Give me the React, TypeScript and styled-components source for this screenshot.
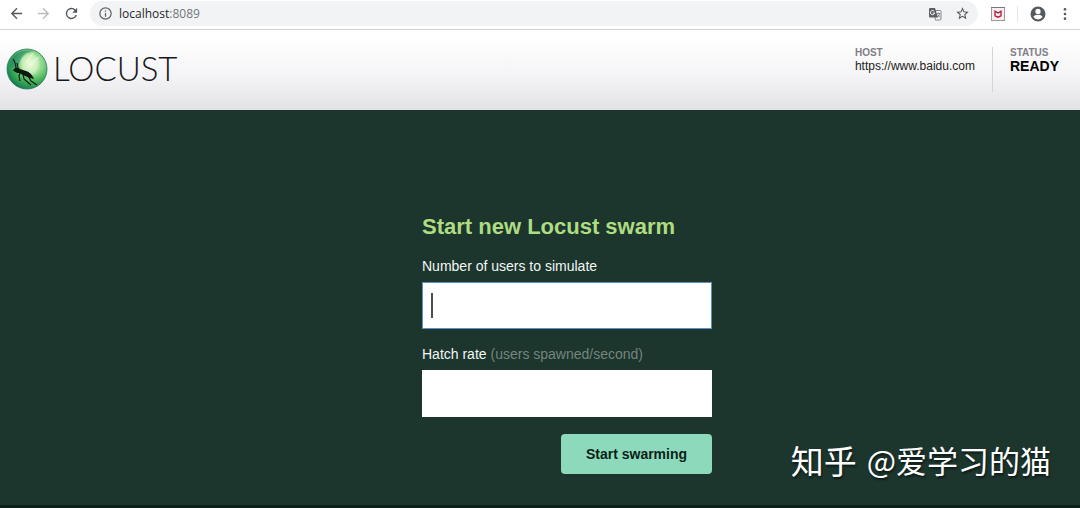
import React from "react";
import styled, { createGlobalStyle } from "styled-components";

const Global = createGlobalStyle`
  * { box-sizing: border-box; }
  html, body, #root { height: 100%; }
  body {
    margin: 0;
    background: #1c352d;
    font-family: "Liberation Sans", Arial, sans-serif;
  }
`;

const Page = styled.div`
  position: relative;
  display: flex;
  flex-direction: column;
  min-height: 100%;
`;

const Toolbar = styled.div`
  display: flex;
  align-items: center;
  height: 30px;
  padding: 0 7px 2px 8px;
  background: #fff;
  border-bottom: 1px solid #d2d3d5;
`;

const IconButton = styled.button<{ $gap?: number }>`
  display: flex;
  flex: none;
  padding: 0;
  margin-right: ${(p) => p.$gap ?? 0}px;
  border: 0;
  background: none;
`;

const AddressBar = styled.div`
  display: flex;
  flex: 1;
  align-items: center;
  height: 25px;
  margin-right: 13px;
  padding: 0 8px;
  border-radius: 13px;
  background: #f1f3f4;
`;

const Address = styled.div`
  flex: 1;
  margin-left: 6px;
  color: #74777b;
  font: 12px/16px "Open Sans", "Noto Sans", sans-serif;
`;

const AddressHost = styled.span`
  color: #26282b;
`;

const Separator = styled.div`
  width: 1px;
  height: 16px;
  margin-right: 11px;
  background: #e6e7e9;
`;

const Header = styled.header`
  display: flex;
  justify-content: space-between;
  height: 80px;
  padding: 17px 21px 0 6px;
  background: linear-gradient(#fff 10%, #f5f4f6 55%, #e3e2e5);
`;

const Brand = styled.a`
  display: flex;
  align-items: center;
  gap: 5px;
  height: 44px;
  color: #17181a;
  text-decoration: none;
`;

const BrandName = styled.span`
  padding-bottom: 2px;
  font: 300 33px/42px Lato, sans-serif;
`;

const Stats = styled.div`
  display: flex;
`;

const Stat = styled.div`
  height: 45px;
  & + & {
    margin-left: 17px;
    padding-left: 17px;
    border-left: 1px solid #d4d3d6;
  }
`;

const StatLabel = styled.div`
  color: #808084;
  font-size: 10px;
  font-weight: bold;
  line-height: 12px;
`;

const StatValue = styled.div<{ $strong?: boolean }>`
  color: ${(p) => (p.$strong ? "#000" : "#222")};
  font-size: ${(p) => (p.$strong ? 14 : 12)}px;
  font-weight: ${(p) => (p.$strong ? "bold" : "normal")};
  line-height: 14px;
`;

const Main = styled.main`
  display: flex;
  flex: 1;
  justify-content: center;
  padding: 102px 0 30px 54px;
  border-bottom: 3px solid #10201b;
  background: #1c352d;
`;

const Form = styled.form`
  display: flex;
  flex-direction: column;
  width: 290px;
`;

const Title = styled.h2`
  margin: 0 0 16px;
  color: #addc81;
  font-size: 22px;
  line-height: 30px;
  white-space: nowrap;
`;

const Label = styled.label`
  margin-bottom: 8px;
  color: #f2f7f4;
  font-size: 14px;
  line-height: 16px;
`;

const Hint = styled.span`
  color: #75857d;
`;

const Field = styled.input<{ $current?: boolean }>`
  height: 47px;
  margin-bottom: 17px;
  padding: 0 9px;
  border: 1px solid ${(p) => (p.$current ? "#5b91c4" : "#fff")};
  border-radius: 0;
  outline: 0;
  background: ${(p) =>
    p.$current
      ? "linear-gradient(#4c4f58, #4c4f58) 8px center / 2px 25px no-repeat #fff"
      : "#fff"};
  font: 22px/26px "Liberation Sans", Arial, sans-serif;
`;

const Submit = styled.button`
  align-self: flex-end;
  width: 151px;
  height: 40px;
  padding: 0;
  border: 0;
  border-radius: 4px;
  background: #8cdabb;
  color: #0b1f17;
  font: bold 14px/16px "Liberation Sans", Arial, sans-serif;
`;

const Watermark = styled.div`
  position: absolute;
  right: 29px;
  bottom: 26px;
  display: flex;
  align-items: center;
  gap: 10px;
  color: #fff;
  font: 31px/44px "Noto Sans CJK SC", sans-serif;
  text-shadow: 1px 2px 2px rgba(0, 0, 0, 0.5);
`;

const WatermarkSite = styled.span`
  font-size: 33px;
`;

const LocustLogo = () => (
  <svg width="42" height="42" viewBox="0 0 42 42" aria-hidden="true">
    <defs>
      <radialGradient id="orb" cx="0.62" cy="0.36" r="0.7">
        <stop offset="0" stopColor="#c8f0b4" />
        <stop offset="0.4" stopColor="#8bd68a" />
        <stop offset="0.65" stopColor="#46b25a" />
        <stop offset="0.9" stopColor="#1f8a50" />
        <stop offset="1" stopColor="#126a4c" />
      </radialGradient>
      <radialGradient id="glow">
        <stop offset="0" stopColor="#eefbe0" stopOpacity="0.95" />
        <stop offset="0.7" stopColor="#d6f4c2" stopOpacity="0.75" />
        <stop offset="1" stopColor="#b8e9a8" stopOpacity="0" />
      </radialGradient>
    </defs>
    <circle cx="21" cy="21" r="20" fill="url(#orb)" stroke="#2b7a66" strokeWidth="0.8" />
    <path d="M4 15C7 6 16 1 27 3C19 5 14 10 13 17L5 20Z" fill="#1c806a" opacity="0.55" />
    <ellipse cx="24" cy="16" rx="11" ry="13" fill="url(#glow)" />
    <path d="M20 15L27 5M24 17L33 9" stroke="#f8fff0" strokeWidth="1.200" opacity="0.6" />
    <path d="M8 21C9 19 12 19 14 21L20 23C24 24 27 28 28 31L24 30L19 28L13 25C10 25 7 23 8 21Z" fill="#0b1b12" />
    <path d="M10 21Q10 15 7 11M12 20L11 15M10 23L7 22M14 25L13 28L14 33M17 26L18 31L25 37M22 28L25 33L31 37" fill="none" stroke="#0b1b12" strokeWidth="1.200" strokeLinejoin="round" />
  </svg>
);

export default function App() {
  return (
    <Page>
      <Global />
      <Toolbar>
        <IconButton $gap={10} aria-label="Back">
          <svg width="17" height="17" viewBox="0 0 24 24" fill="#55585c">
            <path d="M20 11H7.8l5.6-5.6L12 4l-8 8 8 8 1.4-1.4L7.8 13H20z" />
          </svg>
        </IconButton>
        <IconButton $gap={11} aria-label="Forward">
          <svg width="17" height="17" viewBox="0 0 24 24" fill="#b9bbbe">
            <path d="M4 11h12.200l-5.600-5.600L12 4l8 8-8 8-1.400-1.400 5.600-5.600H4z" />
          </svg>
        </IconButton>
        <IconButton $gap={10} aria-label="Reload">
          <svg width="17" height="17" viewBox="0 0 24 24" fill="#55585c">
            <path d="M17.650 6.350A8 8 0 1 0 19.730 14h-2.080A6 6 0 1 1 12 6c1.660 0 3.140.69 4.220 1.780L13 11h7V4z" />
          </svg>
        </IconButton>
        <AddressBar>
          <IconButton aria-label="Site information">
            <svg width="15" height="15" viewBox="0 0 24 24" fill="#606368">
              <path d="M11 7h2v2h-2zm0 4h2v6h-2zm1-9a10 10 0 1 0 0 20 10 10 0 0 0 0-20zm0 18a8 8 0 1 1 0-16 8 8 0 0 1 0 16z" />
            </svg>
          </IconButton>
          <Address>
            <AddressHost>localhost</AddressHost>:8089
          </Address>
          <IconButton $gap={13} aria-label="Translate">
            <svg width="14" height="14" viewBox="0 0 14 14">
              <path d="M5.500 3.500H12Q13 3.500 13 4.500V12Q13 13 12 13H7.500Z" fill="#f4f5f6" stroke="#85888c" />
              <path d="M2 1H7L10 10.500H2Q1 10.500 1 9.500V2Q1 1 2 1Z" fill="#5c5f64" />
              <path d="M6.300 4.500A2.100 2.100 0 1 0 6.600 6.100H4.700" fill="none" stroke="#fff" strokeWidth="1" />
              <path d="M8.700 6.500H12.200M10.500 5.500V6.500M11.700 6.500Q11.200 9 9.500 10.500M9.700 7.500L12 10.500" fill="none" stroke="#777a7f" strokeWidth="0.8" />
            </svg>
          </IconButton>
          <IconButton aria-label="Bookmark this page">
            <svg width="15" height="15" viewBox="0 0 24 24" fill="#4d5054">
              <path d="M22 9.240l-7.190-.62L12 2 9.190 8.630 2 9.240l5.460 4.730L5.820 21 12 17.270 18.180 21l-1.630-7.030zM12 15.400l-3.760 2.270 1-4.280-3.320-2.880 4.380-.38L12 6.100l1.710 4.040 4.380.38-3.320 2.880 1 4.280z" />
            </svg>
          </IconButton>
        </AddressBar>
        <IconButton $gap={12} aria-label="McAfee WebAdvisor">
          <svg width="14" height="14" viewBox="0 0 14 14">
            <rect x="0.500" y="0.500" width="13" height="13" fill="#f8eef1" stroke="#a09598" />
            <path d="M0 0.500H14" stroke="#77777b" />
            <path d="M4 4.200V8.800L7 10.200L10 8.800V4.200L7 6Z" fill="#f8eef1" stroke="#b0183a" strokeWidth="1.300" />
          </svg>
        </IconButton>
        <Separator />
        <IconButton $gap={10} aria-label="Profile">
          <svg width="18" height="18" viewBox="0 0 24 24" fill="#56595d">
            <path d="M12 2a10 10 0 1 0 0 20 10 10 0 0 0 0-20zm0 3a3.500 3.500 0 1 1 0 7 3.500 3.500 0 0 1 0-7zm0 14.200a7.200 7.200 0 0 1-6-3.220c.03-1.990 4-3.080 6-3.080s5.970 1.090 6 3.080a7.200 7.200 0 0 1-6 3.220z" />
          </svg>
        </IconButton>
        <IconButton aria-label="Menu">
          <svg width="16" height="16" viewBox="0 0 24 24" fill="#55585c">
            <circle cx="12" cy="5" r="2" />
            <circle cx="12" cy="12" r="2" />
            <circle cx="12" cy="19" r="2" />
          </svg>
        </IconButton>
      </Toolbar>
      <Header>
        <Brand href="#">
          <LocustLogo />
          <BrandName>LOCUST</BrandName>
        </Brand>
        <Stats>
          <Stat>
            <StatLabel>HOST</StatLabel>
            <StatValue>https://www.baidu.com</StatValue>
          </Stat>
          <Stat>
            <StatLabel>STATUS</StatLabel>
            <StatValue $strong>READY</StatValue>
          </Stat>
        </Stats>
      </Header>
      <Main>
        <Form onSubmit={(e) => e.preventDefault()}>
          <Title>Start new Locust swarm</Title>
          <Label htmlFor="users">Number of users to simulate</Label>
          <Field id="users" type="text" $current />
          <Label htmlFor="rate">
            Hatch rate <Hint>(users spawned/second)</Hint>
          </Label>
          <Field id="rate" type="text" />
          <Submit type="submit">Start swarming</Submit>
        </Form>
      </Main>
      <Watermark>
        <WatermarkSite>知乎</WatermarkSite>
        <span>@爱学习的猫</span>
      </Watermark>
    </Page>
  );
}
